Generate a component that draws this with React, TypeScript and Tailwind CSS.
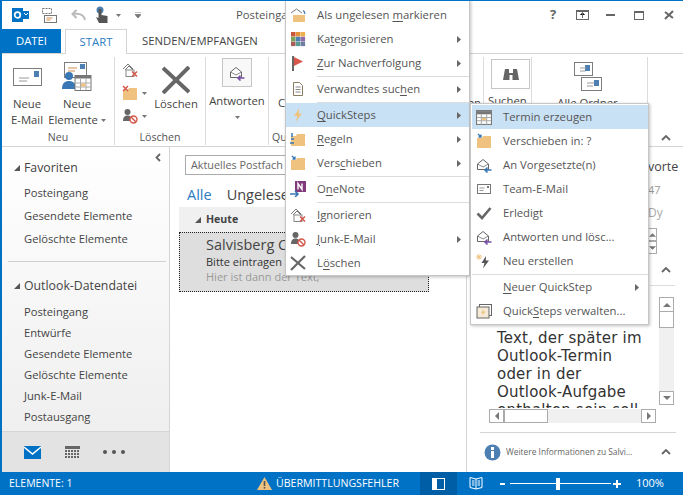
import type { FC, ReactNode } from 'react';

/* ---------- little svg icons ---------- */

const Svg: FC<{ w?: number; h?: number; children: ReactNode }> = ({ w = 16, h = 16, children }) => (
  <svg width={w} height={h} viewBox={`0 0 ${w} ${h}`} fill="none" className="block shrink-0">
    {children}
  </svg>
);

const SmallArrow = () => (
  <svg width="5" height="3" viewBox="0 0 5 3" className="block"><path d="M0 0h5L2.500 3z" fill="#777" /></svg>
);

const SubArrow = () => (
  <svg width="4" height="7" viewBox="0 0 4 7" className="block"><path d="M0 0l4 3.500L0 7z" fill="#666" /></svg>
);

const Corner = () => (
  <svg width="6" height="6" viewBox="0 0 6 6" className="block shrink-0"><path d="M6 0v6H0z" fill="#555" /></svg>
);

const Chevron = () => (
  <svg width="10" height="6" viewBox="0 0 10 6" className="block"><path d="M1 5l4-4 4 4" stroke="#666" strokeWidth="1.800" fill="none" /></svg>
);

const Envelope: FC<{ w: number; h: number; stamp?: string }> = ({ w, h, stamp = '#4d7fb3' }) => (
  <svg width={w} height={h} viewBox={`0 0 ${w} ${h}`} className="block">
    <rect x=".5" y=".5" width={w - 1} height={h - 1} fill="#fff" stroke="#7d7d7d" />
    <rect x={w - 8} y="3" width="5" height="6" fill={stamp} />
    <path d={`M6 ${h - 8}h${w * 0.35}M6 ${h - 5}h${w * 0.28}`} stroke="#9a9a9a" />
  </svg>
);

const OpenMail: FC<{ arrow?: string }> = ({ arrow = '#7b4fa3' }) => (
  <Svg>
    <path d="M1.500 7L7 2.500 12.500 7v5.500h-11z" fill="#fff" stroke="#666" />
    <path d="M1.500 7L7 10l5.500-3" stroke="#888" />
    <path d="M15.500 13H9M11.500 10.500L9 13l2.500 2.500" stroke={arrow} strokeWidth="1.600" />
  </Svg>
);

const FolderTan: FC<{ mark?: ReactNode }> = ({ mark }) => (
  <Svg>
    <path d="M1 5h5l1-2h8v12H1z" fill="#efc27f" />
    {mark}
  </Svg>
);

const IgnoreIcon = () => (
  <Svg>
    <path d="M1 7l5-5 5 5M3 8l4-4 4 4" stroke="#777" fill="none" />
    <rect x="4" y="8" width="8" height="6.500" fill="#fff" stroke="#888" />
    <path d="M10 9.500l5 5M15 9.500l-5 5" stroke="#d4574a" strokeWidth="1.500" />
  </Svg>
);

const JunkIcon = () => (
  <Svg>
    <circle cx="5.500" cy="4" r="3" fill="#666" />
    <path d="M1 13c0-4 2-5.500 4.500-5.500S10 9 10 13z" fill="#666" />
    <circle cx="11.500" cy="11.500" r="3.500" fill="#fff" stroke="#d4574a" strokeWidth="1.400" />
    <path d="M9 9l5 5" stroke="#d4574a" strokeWidth="1.400" />
  </Svg>
);

const CalGrid: FC<{ w?: number; h?: number }> = ({ w = 15, h = 14 }) => (
  <svg width={w} height={h} viewBox="0 0 15 14" className="block shrink-0">
    <rect x=".5" y=".5" width="14" height="13" fill="#fff" stroke="#777" />
    <rect x="1" y="1" width="13" height="3" fill="#777" />
    <path d="M5 4v9.500M10 4v9.500M1 7h13M1 10h13" stroke="#aaa" />
    <rect x="5.500" y="7.500" width="4" height="2" fill="#efc27f" />
  </svg>
);

const BoltIcon: FC<{ c?: string }> = ({ c = '#efc27f' }) => (
  <Svg>
    <path d="M9.500 1L4 9h3.500L5.500 15 12 6.500H8.500z" fill={c} />
  </Svg>
);

const XIcon: FC<{ s: number; sw: number }> = ({ s, sw }) => (
  <svg width={s} height={s} viewBox={`0 0 ${s} ${s}`} className="block">
    <path d={`M1 2L${s - 1} ${s - 2}M${s - 1} 1L1 ${s - 1}`} stroke="#666" strokeWidth={sw} />
  </svg>
);

const CategoryIcon = () => (
  <svg width="16" height="16" viewBox="0 0 16 16" className="block">
    <rect x="1" y="1" width="4.500" height="4.500" fill="#c8573f" />
    <rect x="5.800" y="1" width="4.500" height="4.500" fill="#e3923a" />
    <rect x="10.600" y="1" width="4.500" height="4.500" fill="#eeb04e" />
    <rect x="1" y="5.800" width="4.500" height="4.500" fill="#7aa35a" />
    <rect x="5.800" y="5.800" width="4.500" height="4.500" fill="#4d7fb3" />
    <rect x="10.600" y="5.800" width="4.500" height="4.500" fill="#8d6aa8" />
    <rect x="1" y="10.600" width="4.500" height="4.500" fill="#a85d58" />
    <rect x="5.800" y="10.600" width="4.500" height="4.500" fill="#5a9c94" />
    <rect x="10.600" y="10.600" width="4.500" height="4.500" fill="#6f7ea0" />
  </svg>
);

/* ---------- menus ---------- */

interface MenuRow {
  icon?: ReactNode;
  pre: string;
  key_?: string;
  post?: string;
  arrow?: boolean;
  active?: boolean;
  sep?: boolean;
}

const contextRows: MenuRow[] = [
  {
    pre: 'Als ungelesen ', key_: 'm', post: 'arkieren',
    icon: (
      <Svg>
        <path d="M1 6l5.500-4L12 6" stroke="#777" fill="none" />
        <rect x="3" y="8" width="12" height="7" fill="#efc27f" />
        <path d="M13 3.500a3 3 0 0 1 1.500 3.500" stroke="#4d7fb3" strokeWidth="1.300" />
      </Svg>
    ),
  },
  { pre: 'Ka', key_: 't', post: 'egorisieren', arrow: true, icon: <CategoryIcon /> },
  {
    pre: '', key_: 'Z', post: 'ur Nachverfolgung', arrow: true, sep: true,
    icon: (
      <Svg>
        <rect x="2" y="1" width="2" height="15" fill="#666" />
        <path d="M4 2l9 4.500L4 11z" fill="#d9574a" />
      </Svg>
    ),
  },
  {
    pre: 'Verwandtes suc', key_: 'h', post: 'en', arrow: true, sep: true,
    icon: (
      <Svg>
        <path d="M3.500 1.500h6l3 3v10h-9z" fill="#fff" stroke="#8a7a60" />
        <path d="M5.500 6h5M5.500 8.500h5M5.500 11h5" stroke="#888" />
      </Svg>
    ),
  },
  { pre: '', key_: 'Q', post: 'uickSteps', arrow: true, active: true, icon: <BoltIcon /> },
  {
    pre: '', key_: 'R', post: 'egeln', arrow: true,
    icon: (
      <FolderTan mark={<path d="M2 2v4M1 8h3M0 12h4" stroke="#3a78b5" strokeWidth="1.500" />} />
    ),
  },
  {
    pre: 'Vers', key_: 'c', post: 'hieben', arrow: true, sep: true,
    icon: <FolderTan mark={<path d="M2 1l3 3M5 1.500V4H2.500" stroke="#3a78b5" strokeWidth="1.300" />} />,
  },
  {
    pre: 'O', key_: 'n', post: 'eNote', sep: true,
    icon: (
      <Svg>
        <rect x="5" y="0" width="11" height="11" fill="#80397b" />
        <path d="M8 8.500v-6l4 6v-6" stroke="#fff" strokeWidth="1.400" />
        <path d="M0 13h7M5 10l3 3-3 3" stroke="#3a78b5" strokeWidth="1.600" />
      </Svg>
    ),
  },
  { pre: '', key_: 'I', post: 'gnorieren', icon: <IgnoreIcon /> },
  { pre: '', key_: 'J', post: 'unk-E-Mail', arrow: true, icon: <JunkIcon /> },
  { pre: 'L', key_: 'ö', post: 'schen', icon: <XIcon s={16} sw={2.200} /> },
];

const stepRows: MenuRow[] = [
  { pre: 'Termin erzeugen', active: true, icon: <CalGrid w={16} h={15} /> },
  { pre: 'Verschieben in: ?', icon: <FolderTan mark={<path d="M2 1l3 3M5 1.500V4H2.500" stroke="#3a78b5" strokeWidth="1.300" />} /> },
  { pre: 'An Vorgesetzte(n)', icon: <OpenMail arrow="#3a78b5" /> },
  {
    pre: 'Team-E-Mail',
    icon: (
      <Svg>
        <rect x="1.500" y="3.500" width="13" height="9" fill="#fff" stroke="#777" />
        <path d="M3.500 7h5M3.500 9.500h4" stroke="#999" />
        <rect x="11" y="5" width="2" height="2" fill="#777" />
      </Svg>
    ),
  },
  {
    pre: 'Erledigt',
    icon: (
      <Svg>
        <path d="M1.500 8.500l4.500 4.500 8.500-10" stroke="#666" strokeWidth="2.600" />
      </Svg>
    ),
  },
  { pre: 'Antworten und lösc...', icon: <OpenMail /> },
  {
    pre: 'Neu erstellen', sep: true,
    icon: (
      <Svg>
        <path d="M10 3L5.500 10h3L7 15.500 13 7.500H9.800z" fill="#555" />
        <path d="M3 1v6M0 4h6M1 2l4 4M5 2L1 6" stroke="#efc27f" />
      </Svg>
    ),
  },
  { pre: '', key_: 'N', post: 'euer QuickStep', arrow: true },
  {
    pre: 'Quick', key_: 'S', post: 'teps verwalten...',
    icon: (
      <Svg>
        <rect x="3.500" y="1.500" width="12" height="11" fill="#fff" stroke="#666" />
        <rect x="1" y="4" width="12" height="11" fill="#f5ead6" stroke="#666" />
        <path d="M8 6L5 10h2l-1 3 3.500-4.500H7.500z" fill="#efc27f" />
      </Svg>
    ),
  },
];

const MenuLine: FC<{ row: MenuRow; textCol: string; arrowPad: string }> = ({ row, textCol, arrowPad }) => (
  <div className={`flex h-6 items-center ${arrowPad} ${row.active ? 'bg-[#c9e1f4]' : ''}`}>
    <div className={`flex h-full shrink-0 items-center pl-1 ${textCol}`}>{row.icon}</div>
    <span className="flex-1 whitespace-nowrap">
      {row.pre}
      {row.key_ && <span className="underline underline-offset-2">{row.key_}</span>}
      {row.post}
    </span>
    {row.arrow && <SubArrow />}
  </div>
);

const ContextMenu = () => (
  <div className="absolute left-[285px] top-0 z-10 h-[276px] w-[185px] border border-t-0 border-[#c6c6c6] bg-white pt-[3px] text-[11.3px] text-[#555] shadow-[1px_1px_3px_rgba(0,0,0,0.25)]">
    {contextRows.map((row) => (
      <div key={row.pre + row.post}>
        <MenuLine row={row} textCol="w-[31px]" arrowPad="pr-[8px]" />
        {row.sep && <div className="ml-[31px] h-[2px] border-b border-[#dcdcdc]" />}
      </div>
    ))}
  </div>
);

const StepsMenu = () => (
  <div className="absolute left-[470px] top-[103px] z-20 h-[222px] w-[179px] border border-[#c6c6c6] bg-white pt-[1px] pl-[1px] text-[11.3px] text-[#555] shadow-[1px_1px_3px_rgba(0,0,0,0.25)]">
    {stepRows.map((row) => (
      <div key={row.pre + row.post}>
        <MenuLine row={row} textCol="w-[31px]" arrowPad="pr-[9px]" />
        {row.sep && <div className="h-[2px] border-b border-[#dcdcdc]" />}
      </div>
    ))}
  </div>
);

/* ---------- window chrome ---------- */

const TitleBar = () => (
  <div className="flex h-[28px] items-center text-[#555]">
    <div className="ml-[10px]">
      <svg width="17" height="16" viewBox="0 0 17 16" className="block">
        <rect x="0" y="1" width="11" height="14" fill="#0072c6" />
        <circle cx="5.500" cy="8" r="2.800" stroke="#fff" strokeWidth="1.700" fill="none" />
        <rect x="11" y="4" width="6" height="8" fill="#0072c6" />
        <path d="M12 6l2 2 2-2" stroke="#fff" fill="none" />
      </svg>
    </div>
    <div className="ml-[12px]">
      <Svg>
        <rect x="1.500" y="1.500" width="9" height="5" fill="#fff" stroke="#777" strokeDasharray="2 1" />
        <rect x="3.500" y="8.500" width="12" height="7" fill="#fff" stroke="#777" />
        <path d="M5.500 11h6M5.500 13h4" stroke="#d08a4a" />
      </Svg>
    </div>
    <div className="ml-[13px]">
      <svg width="16" height="14" viewBox="0 0 16 14" className="block">
        <path d="M15 12C14 7 10 5 3 6M6.500 2L2.500 6l4 4" stroke="#bbb" strokeWidth="2" fill="none" />
      </svg>
    </div>
    <div className="ml-[9px]">
      <svg width="13" height="18" viewBox="0 0 13 18" className="block">
        <circle cx="5" cy="4" r="3.500" fill="#4d7fb3" />
        <path d="M3.500 3h3v6l6 1v7H4L1 11l2.500 1z" fill="#555" />
      </svg>
    </div>
    <div className="ml-[8px]"><SmallArrow /></div>
    <div className="ml-[14px]">
      <svg width="6" height="6" viewBox="0 0 6 6" className="block">
        <path d="M0 0h6M0 2.500h6L3 6z" stroke="#777" fill="#777" strokeWidth=".8" />
      </svg>
    </div>
    <span className="ml-[95px] text-[11.3px] whitespace-nowrap">Posteingang</span>
    <div className="ml-auto flex items-center">
      <span className="w-3 text-center text-[13px] font-bold text-[#666]">?</span>
      <div className="ml-[17px]">
        <svg width="13" height="10" viewBox="0 0 13 10" className="block">
          <rect x=".5" y=".5" width="12" height="9" fill="#fff" stroke="#666" />
          <path d="M6.500 8V3M4 5l2.500-2.500L9 5" stroke="#666" />
          <path d="M1 1.500h11" stroke="#666" />
        </svg>
      </div>
      <div className="ml-[17px] h-[2px] w-[9px] bg-[#666]" />
      <div className="ml-[19px] h-[9px] w-[10px] border border-t-2 border-[#666]" />
      <div className="mr-[9px] ml-[20px]"><XIcon s={10} sw={2} /></div>
    </div>
  </div>
);

const Tabs = () => (
  <div className="flex h-[25px] items-stretch border-b border-[#d4d4d4] text-[11.3px]">
    <div className="flex w-[59px] items-center justify-center bg-[#0072c6] text-white">DATEI</div>
    <div className="relative ml-[4px] -mb-px flex w-[62px] items-center justify-center border border-b-0 border-[#d4d4d4] bg-white text-[#2b7cbf]">
      START
    </div>
    <div className="ml-[15px] flex items-center whitespace-nowrap text-[#444]">SENDEN/EMPFANGEN</div>
  </div>
);

const RibbonGroup: FC<{ w: string; label?: string; labelCls?: string; children: ReactNode }> = ({
  w,
  label,
  labelCls = 'text-center',
  children,
}) => (
  <div className={`flex shrink-0 flex-col ${w} mt-[3px] mb-[1px] border-r border-[#dcdcdc]`}>
    <div className="min-h-0 flex-1">{children}</div>
    <div className={`h-[15px] text-[10.6px] leading-[15px] text-[#555] ${labelCls}`}>{label}</div>
  </div>
);

const BigButton: FC<{ w: string; icon: ReactNode; children: ReactNode }> = ({ w, icon, children }) => (
  <div className={`flex ${w} flex-col items-center text-center text-[11.3px] leading-[16px] text-[#444]`}>
    <div className="flex h-[39px] items-center justify-center">{icon}</div>
    {children}
  </div>
);

const Ribbon = () => (
  <div className="flex h-[93px] items-stretch border-b border-[#d4d4d4]">
    <RibbonGroup w="w-[113px]" label="Neu">
      <div className="flex">
        <BigButton w="w-[50px]" icon={<Envelope w={29} h={18} />}>
          Neue
          <br />
          E-Mail
        </BigButton>
        <BigButton
          w="w-[50px]"
          icon={
            <svg width="30" height="29" viewBox="0 0 30 29" className="block">
              <rect x="2.500" y=".5" width="22" height="15" fill="#fff" stroke="#7d7d7d" />
              <rect x="18" y="2" width="5" height="5" fill="#4d7fb3" />
              <path d="M6 6h9M6 9h7" stroke="#d08a4a" />
              <circle cx="7" cy="14" r="4" fill="#3a78b5" />
              <path d="M0 27c0-6 3-8 7-8s7 2 7 8z" fill="#3a78b5" />
              <rect x="13" y="13.500" width="16" height="15" fill="#fff" stroke="#777" />
              <rect x="13" y="13.500" width="16" height="3" fill="#777" />
              <path d="M18.500 17v11M24 17v11M13 21h16M13 25h16" stroke="#aaa" />
              <rect x="19" y="21.500" width="4.500" height="3" fill="#efc27f" />
            </svg>
          }
        >
          Neue
          <span className="flex items-center justify-center gap-[3px] whitespace-nowrap">
            Elemente <SmallArrow />
          </span>
        </BigButton>
      </div>
    </RibbonGroup>
    <RibbonGroup w="w-[91px]" label="Löschen">
      <div className="flex">
        <div className="flex w-[38px] flex-col items-start gap-[7px] pt-[5px] pl-[7px]">
          <IgnoreIcon />
          <div className="flex items-center gap-[4px]">
            <FolderTan mark={<path d="M1 1l5 5M6 1L1 6" stroke="#d4574a" strokeWidth="1.500" />} />
            <SmallArrow />
          </div>
          <div className="flex items-center gap-[4px]">
            <JunkIcon />
            <SmallArrow />
          </div>
        </div>
        <BigButton w="w-[46px]" icon={<div className="pt-[6px]"><XIcon s={28} sw={4} /></div>}>
          Löschen
        </BigButton>
      </div>
    </RibbonGroup>
    <RibbonGroup w="w-[63px]">
      <div className="flex flex-col items-center pt-[1px] text-[11.3px] leading-[16px] text-[#444]">
        <div className="flex h-[29px] w-[30px] items-center justify-center border border-[#c6c6c6] bg-[#f8f8f8]">
          <OpenMail />
        </div>
        <span className="mt-[6px]">Antworten</span>
        <div className="mt-[7px]"><SmallArrow /></div>
      </div>
    </RibbonGroup>
    <RibbonGroup w="w-[215px]" label="Qu" labelCls="pl-[3px]">
      <div className="flex justify-between pt-[38px] pl-[9px] text-[11.3px] leading-[16px] text-[#444]">
        <span>C</span>
        <span className="pr-[2px]">en</span>
      </div>
    </RibbonGroup>
    <RibbonGroup w="w-[48px]">
      <div className="pt-[2px] text-[11.3px] leading-[16px] text-[#444]">
        <div className="ml-[7px] flex h-[30px] w-[39px] items-center justify-center border border-[#c6c6c6]">
          <svg width="16" height="14" viewBox="0 0 16 14" className="block">
            <path d="M2 2h4v4h4V2h4l2 11H9.500V8h-3v5H0z" fill="#666" />
          </svg>
        </div>
        <div className="mt-[4px] pl-[4px]">Suchen</div>
      </div>
    </RibbonGroup>
    <RibbonGroup w="w-[116px]">
      <div className="flex flex-col items-center pr-[4px] text-[11.3px] leading-[16px] text-[#444]">
        <div className="relative mt-[5px] h-[29px] w-[28px]">
          <div className="absolute top-0 left-0"><Envelope w={19} h={14} /></div>
          <div className="absolute right-0 bottom-0"><Envelope w={21} h={14} /></div>
        </div>
        <span className="mt-[4px] whitespace-nowrap">Alle Ordner</span>
      </div>
    </RibbonGroup>
    <div className="flex flex-1 items-end justify-center pb-[5px]"><Chevron /></div>
  </div>
);

/* ---------- panes ---------- */

const favorites = ['Posteingang', 'Gesendete Elemente', 'Gelöschte Elemente'];
const dataFolders = ['Posteingang', 'Entwürfe', 'Gesendete Elemente', 'Gelöschte Elemente', 'Junk-E-Mail', 'Postausgang'];

const Sidebar = () => (
  <div className="flex w-[168px] shrink-0 flex-col border-r border-[#d5d5d5] text-[#444]">
    <div className="flex-1 bg-gradient-to-b from-white to-[#efefef] pt-[5px]">
      <div className="flex h-[26px] justify-between pr-[8px] pl-[12px]">
        <div className="mt-[6px] flex h-5 items-center gap-[4px] text-[12.300px]">
          <Corner />
          Favoriten
        </div>
        <svg width="6" height="9" viewBox="0 0 6 9" className="mt-[1px] block">
          <path d="M5 1L1.500 4.500 5 8" stroke="#666" strokeWidth="1.800" fill="none" />
        </svg>
      </div>
      <div className="mt-[4px] pl-[22px] text-[11.200px]">
        {favorites.map((f) => (
          <div key={f} className="flex h-[23px] items-center">{f}</div>
        ))}
      </div>
      <div className="mt-[10px] mr-[3px] ml-[6px] border-t border-[#d0d0d0]" />
      <div className="mt-[14px] flex h-5 items-center gap-[4px] pl-[12px] text-[12.300px]">
        <Corner />
        Outlook-Datendatei
      </div>
      <div className="mt-[6px] pl-[22px] text-[11.200px]">
        {dataFolders.map((f) => (
          <div key={f} className="flex h-[21px] items-center">{f}</div>
        ))}
      </div>
    </div>
    <div className="flex h-[41px] items-center border-t border-[#d5d5d5] bg-[#e3e3e3] pl-[22px]">
      <svg width="17" height="13" viewBox="0 0 17 13" className="block">
        <rect width="17" height="13" fill="#0072c6" />
        <path d="M0 1l8.500 7L17 1" stroke="#fff" strokeWidth="1.500" fill="none" />
      </svg>
      <svg width="15" height="13" viewBox="0 0 15 13" className="ml-[24px] block">
        <rect width="15" height="3" fill="#666" />
        <path d="M0 5h15M0 8h15M0 11h15" stroke="#666" strokeWidth="2" strokeDasharray="2 1" />
      </svg>
      <div className="ml-[23px] flex gap-[5px]">
        <div className="h-[4px] w-[4px] rounded-full bg-[#555]" />
        <div className="h-[4px] w-[4px] rounded-full bg-[#555]" />
        <div className="h-[4px] w-[4px] rounded-full bg-[#555]" />
      </div>
    </div>
  </div>
);

const MessageList = () => (
  <div className="w-[297px] shrink-0 border-r border-[#d5d5d5] pt-[8px]">
    <div className="ml-[15px] flex h-[20px] w-[230px] items-center border border-[#ababab] pl-[5px] text-[10.800px] text-[#666]">
      Aktuelles Postfach
    </div>
    <div className="mt-[10px] ml-[17px] flex h-5 items-baseline gap-[15px] text-[14.500px] leading-5">
      <span className="text-[#2b7cbf]">Alle</span>
      <span className="text-[#444]">Ungelesen</span>
    </div>
    <div className="mt-[2px] ml-[9px] flex h-[25px] w-[250px] items-center gap-[5px] bg-[#f0f0f0] pl-[16px] text-[10.600px] font-bold text-[#444]">
      <Corner />
      Heute
    </div>
    <div className="ml-[9px] h-[60px] w-[250px] border border-dotted border-[#222] bg-[#dedede] pt-[3px] pl-[26px]">
      <div className="text-[14.500px] leading-[18px] text-[#444]">Salvisberg C</div>
      <div className="text-[11px] leading-[16px] text-[#333]">Bitte eintragen</div>
      <div className="text-[11px] leading-[14px] text-[#999]">Hier ist dann der Text,</div>
    </div>
  </div>
);

const ScrollBtn: FC<{ dir: 'up' | 'down' | 'left' | 'right'; cls: string }> = ({ dir, cls }) => {
  const d = { up: 'M0 4l4-4 4 4z', down: 'M0 0h8L4 4z', left: 'M4 0v8L0 4z', right: 'M0 0v8l4-4z' }[dir];
  return (
    <div className={`flex shrink-0 items-center justify-center border border-[#ababab] bg-white ${cls}`}>
      <svg
        width={dir === 'up' || dir === 'down' ? 8 : 4}
        height={dir === 'up' || dir === 'down' ? 4 : 8}
        viewBox={dir === 'up' || dir === 'down' ? '0 0 8 4' : '0 0 4 8'}
        className="block"
      >
        <path d={d} fill="#777" />
      </svg>
    </div>
  );
};

const ReadingPane = () => (
  <div className="flex min-w-0 flex-1 flex-col text-[#444]">
    <div className="pt-[10px] pl-[181px]">
      <div className="h-5 text-[12.500px] leading-5 whitespace-nowrap">vorte</div>
      <div className="mt-[3px] h-5 text-[11px] leading-5 text-[#999]">47</div>
      <div className="mt-[3px] h-5 text-[12px] leading-5 text-[#aaa]">Dy</div>
      <div className="mt-[5px] flex h-[26px] w-[9px] flex-col">
        <ScrollBtn dir="up" cls="h-[13px] w-[9px]" />
        <ScrollBtn dir="down" cls="h-[13px] w-[9px]" />
      </div>
    </div>
    <div className="mt-[13px] flex justify-end pr-[12px]"><Chevron /></div>
    <div className="mt-[12px] ml-[183px] mr-[8px] border-t border-[#dcdcdc]" />
    <div className="mt-[11px] flex h-[126px] pr-[9px] pl-[22px]">
      <div className="flex w-[170px] flex-col">
        <div className="h-[111px] overflow-hidden pt-[32px] pl-[8px] font-['DejaVu_Sans',sans-serif] text-[15px] leading-[18px] tracking-[0.2px] whitespace-nowrap text-[#333]">
          Text, der später im
          <br />
          Outlook-Termin
          <br />
          oder in der
          <br />
          Outlook-Aufgabe
          <br />
          enthalten sein soll
        </div>
        <div className="mt-[1px] flex h-[14px] w-[167px] bg-[#f0f0f0]">
          <ScrollBtn dir="left" cls="h-[14px] w-[15px]" />
          <div className="h-[14px] w-[44px] border border-[#ababab] bg-white" />
          <div className="flex-1" />
          <ScrollBtn dir="right" cls="h-[14px] w-[15px]" />
        </div>
      </div>
      <div className="flex h-[108px] w-[15px] flex-col bg-[#f0f0f0]">
        <ScrollBtn dir="up" cls="h-[15px] w-[15px]" />
        <div className="h-[16px] w-[15px] border border-t-0 border-[#ababab] bg-white" />
        <div className="flex-1" />
        <ScrollBtn dir="down" cls="h-[14px] w-[15px]" />
      </div>
    </div>
    <div className="mt-[9px] mr-[7px] ml-[13px] border-t border-[#d5d5d5]" />
    <div className="flex h-[38px] items-center pr-[12px] pl-[17px]">
      <svg width="17" height="17" viewBox="0 0 17 17" className="block">
        <circle cx="8.500" cy="8.500" r="8" fill="#4d7fb3" />
        <rect x="7" y="7" width="3" height="7" fill="#fff" />
        <rect x="7" y="3" width="3" height="3" fill="#fff" />
      </svg>
      <span className="ml-[5px] flex-1 whitespace-nowrap text-[8.400px] text-[#666]">Weitere Informationen zu Salvi...</span>
      <Chevron />
    </div>
  </div>
);

const StatusBar = () => (
  <div className="flex h-[23px] items-center bg-[#0072c6] pl-[9px] text-[11px] text-white">
    <span className="w-[247px] text-[10.500px] whitespace-nowrap">ELEMENTE: 1</span>
    <svg width="15" height="13" viewBox="0 0 15 13" className="ml-[1px] block">
      <path d="M7.500 0L15 13H0z" fill="#efc27f" />
      <rect x="6.700" y="4" width="1.600" height="5" fill="#555" />
      <rect x="6.700" y="10" width="1.600" height="1.600" fill="#555" />
    </svg>
    <span className="ml-[4px] w-[144px] text-[10.600px] whitespace-nowrap">ÜBERMITTLUNGSFEHLER</span>
    <div className="flex h-full w-[37px] items-center justify-center bg-[#005ea6]">
      <div className="flex h-[12px] w-[13px] border border-white">
        <div className="w-[4px] bg-white" />
      </div>
    </div>
    <svg width="14" height="13" viewBox="0 0 14 13" className="ml-[12px] block">
      <path d="M7 2L1 .5v10L7 12l6-1.500V.5z" fill="none" stroke="#fff" />
      <path d="M7 2v10M3 4h2.500M3 6h2.500M3 8h2.500M8.500 4H11M8.500 6H11M8.500 8H11" stroke="#fff" />
    </svg>
    <div className="ml-[17px] h-[2px] w-[5px] bg-white" />
    <div className="relative ml-[5px] flex h-[12px] w-[101px] items-center">
      <div className="h-px w-full bg-white" />
      <div className="absolute top-0 left-[46px] h-[12px] w-[4px] bg-white" />
    </div>
    <svg width="8" height="8" viewBox="0 0 8 8" className="ml-[2px] block">
      <path d="M0 4h8M4 0v8" stroke="#fff" strokeWidth="2" />
    </svg>
    <span className="ml-[15px]">100%</span>
  </div>
);

export default function App() {
  return (
    <div className="relative h-[495px] w-[683px] overflow-hidden border-t border-l-2 border-[#0072c6] bg-white font-['Open_Sans',sans-serif]">
      <div className="flex h-full flex-col">
        <TitleBar />
        <Tabs />
        <Ribbon />
        <div className="flex min-h-0 flex-1">
          <Sidebar />
          <MessageList />
          <ReadingPane />
        </div>
        <div className="-ml-[2px]"><StatusBar /></div>
      </div>
      <div className="absolute -top-px -left-[2px]">
        <ContextMenu />
        <StepsMenu />
      </div>
    </div>
  );
}
